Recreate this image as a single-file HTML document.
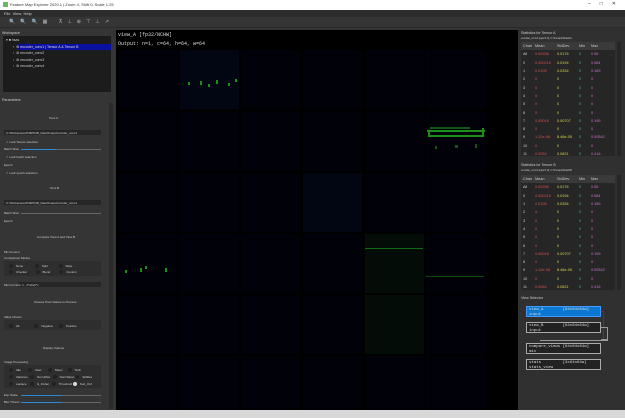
<!DOCTYPE html><html><head><style>
*{margin:0;padding:0;box-sizing:border-box}
body{width:625px;height:418px;background:#353535;font-family:"Liberation Sans",sans-serif;color:#ccc;position:relative;overflow:hidden;font-size:4px}
.a{position:absolute}
.t{position:absolute;white-space:nowrap}
.tile{position:absolute;width:59px;height:59px;background:#01010a}
.g{position:absolute;background:#1a8f1a}
table{border-collapse:collapse;font-size:3.8px;width:94px;table-layout:fixed}
td{height:8.3px;padding:0 0 0 2px;white-space:nowrap;overflow:hidden}
.r{color:#e05050}.y{color:#d8d84a}.gr{color:#40c060}.m{color:#d070d0}
.rad{display:inline-block;width:4px;height:4px;border-radius:50%;background:#222;vertical-align:middle;margin-right:3px}
.sl{position:absolute;height:1px;background:#666}
.node{position:absolute;border:1px solid #aaa;background:#222;font-family:"Liberation Mono",monospace;font-size:4px;color:#ddd;padding:1px 2px;line-height:5px}
</style></head><body>
<div class="a" style="left:0;top:0;width:625px;height:10px;background:#fff"></div>
<div class="a" style="left:3px;top:2px;width:5px;height:5px;background:#6b6"></div>
<div class="t" style="left:10px;top:2px;color:#333;font-size:4px">Feature Map Explorer 2020.1 | Zoom 4, Shift 0, Scale 1.25</div>
<div class="t" style="left:588px;top:1px;color:#333;font-size:5px;letter-spacing:9px">–□✕</div>
<div class="a" style="left:0;top:10px;width:625px;height:7px;background:#2d2d2d"></div>
<div class="t" style="left:4px;top:11px;font-size:4px">File&nbsp;&nbsp;View&nbsp;&nbsp;Help</div>
<div class="a" style="left:0;top:17px;width:625px;height:11px;background:#353535;border-bottom:1px solid #2a2a2a"></div>
<div class="t" style="left:9px;top:19px;font-size:5px;color:#bbb;letter-spacing:5px">🔍🔍🔍▦ ⊼⊥⊕⊤⊥↗</div>
<!-- left -->
<div class="t" style="left:2px;top:31px;font-size:3.6px">Workspace</div>
<div class="a" style="left:3px;top:36px;width:108px;height:56px;background:#1c1c1c"></div>
<div class="t" style="left:6px;top:38px;font-size:3.5px">▾ ■ hsas</div>
<div class="a" style="left:18px;top:44px;width:93px;height:6px;background:#0c10a0"></div>
<div class="t" style="left:13px;top:45px;font-size:3.5px;color:#ddd">›&nbsp;&nbsp;⚙ encoder_conv1 | Tensor A &amp; Tensor B</div>
<div class="t" style="left:13px;top:51px;font-size:3.5px">›&nbsp;&nbsp;⚙ encoder_conv2</div>
<div class="t" style="left:13px;top:58px;font-size:3.5px">›&nbsp;&nbsp;⚙ encoder_conv3</div>
<div class="t" style="left:13px;top:64px;font-size:3.5px">›&nbsp;&nbsp;⚙ encoder_conv4</div>
<div class="t" style="left:2px;top:98px;font-size:3.6px">Parameters</div>
<div class="a" style="left:109px;top:103px;width:4px;height:306px;background:#2a2a2a"></div>
<div class="t" style="left:49px;top:116px;font-size:3px">Tens A</div>
<div class="a" style="left:4px;top:130px;width:97px;height:5px;background:#262626"></div>
<div class="t" style="left:6px;top:131px;font-size:3px">C:/Workspace/PHB/PHB_Data/fmaps/encoder_conv1</div>
<div class="t" style="left:6px;top:140px;font-size:3px">✓ Lock Tensor selection</div>
<div class="t" style="left:4px;top:147px;font-size:3px">Batch Slice</div>
<div class="a" style="left:21px;top:149px;width:35px;height:1px;background:#2a8ad8"></div>
<div class="sl" style="left:56px;top:149px;width:45px"></div>
<div class="t" style="left:6px;top:155px;font-size:3px">✓ Lock batch selection</div>
<div class="t" style="left:4px;top:163px;font-size:3px">Epoch</div>
<div class="t" style="left:6px;top:171px;font-size:3px">✓ Lock epoch selection</div>
<div class="t" style="left:50px;top:186px;font-size:3px">Tens B</div>
<div class="a" style="left:4px;top:200px;width:97px;height:5px;background:#262626"></div>
<div class="t" style="left:6px;top:201px;font-size:3px">C:/Workspace/PHB/PHB_Data/fmaps/encoder_conv1</div>
<div class="t" style="left:4px;top:211px;font-size:3px">Batch Slice</div>
<div class="sl" style="left:21px;top:213px;width:80px"></div>
<div class="t" style="left:4px;top:219px;font-size:3px">Epoch</div>
<div class="t" style="left:37px;top:235px;font-size:3px">Compare View A and View B</div>
<div class="t" style="left:4px;top:250px;font-size:3px">Mix Amount</div>
<div class="t" style="left:4px;top:256px;font-size:3px">Comparison Modes</div>
<div class="a" style="left:4px;top:261px;width:97px;height:15px;background:#2e2e2e"></div>
<div class="t" style="left:9px;top:264px;font-size:3px"><span class="rad"></span>None&nbsp;&nbsp;&nbsp;&nbsp;&nbsp;&nbsp;&nbsp;&nbsp;&nbsp;&nbsp;&nbsp;&nbsp;&nbsp;&nbsp;<span class="rad"></span>Split&nbsp;&nbsp;&nbsp;&nbsp;&nbsp;&nbsp;&nbsp;&nbsp;&nbsp;&nbsp;&nbsp;&nbsp;&nbsp;<span class="rad"></span>Wipe</div>
<div class="t" style="left:9px;top:270px;font-size:3px"><span class="rad"></span>Checker&nbsp;&nbsp;&nbsp;&nbsp;&nbsp;&nbsp;&nbsp;&nbsp;&nbsp;&nbsp;<span class="rad"></span>Blend&nbsp;&nbsp;&nbsp;&nbsp;&nbsp;&nbsp;&nbsp;&nbsp;&nbsp;&nbsp;&nbsp;<span class="rad"></span>Custom</div>
<div class="a" style="left:18px;top:282px;width:83px;height:5px;background:#262626"></div>
<div class="t" style="left:4px;top:283px;font-size:3px">Mix Formula&nbsp;&nbsp;1 - 2*abs(t*x</div>
<div class="t" style="left:34px;top:300px;font-size:3px">Choose Pixel Values to Process</div>
<div class="t" style="left:4px;top:315px;font-size:3px">Value Choice</div>
<div class="a" style="left:4px;top:320px;width:97px;height:10px;background:#2e2e2e"></div>
<div class="t" style="left:9px;top:324px;font-size:3px"><span class="rad"></span>All&nbsp;&nbsp;&nbsp;&nbsp;&nbsp;&nbsp;&nbsp;&nbsp;&nbsp;&nbsp;&nbsp;&nbsp;&nbsp;&nbsp;&nbsp;&nbsp;&nbsp;&nbsp;<span class="rad"></span>Negative&nbsp;&nbsp;&nbsp;&nbsp;&nbsp;&nbsp;&nbsp;<span class="rad"></span>Positive</div>
<div class="t" style="left:43px;top:346px;font-size:3px">Display Options</div>
<div class="t" style="left:4px;top:360px;font-size:3px">Image Processing</div>
<div class="a" style="left:4px;top:365px;width:97px;height:23px;background:#2e2e2e"></div>
<div class="t" style="left:9px;top:368px;font-size:3px"><span class="rad"></span>Idle&nbsp;&nbsp;&nbsp;&nbsp;&nbsp;&nbsp;&nbsp;&nbsp;&nbsp;<span class="rad"></span>Raw&nbsp;&nbsp;&nbsp;&nbsp;&nbsp;&nbsp;&nbsp;&nbsp;<span class="rad"></span>Mean&nbsp;&nbsp;&nbsp;&nbsp;&nbsp;&nbsp;<span class="rad"></span>Tanh</div>
<div class="t" style="left:9px;top:375px;font-size:3px"><span class="rad"></span>Variance&nbsp;&nbsp;&nbsp;<span class="rad"></span>NormMax&nbsp;&nbsp;&nbsp;<span class="rad"></span>NormMean&nbsp;<span class="rad"></span>StdDev</div>
<div class="t" style="left:9px;top:382px;font-size:3px"><span class="rad"></span>Laplace&nbsp;&nbsp;&nbsp;&nbsp;<span class="rad"></span>G_Fisher&nbsp;&nbsp;&nbsp;<span class="rad"></span>Threshold&nbsp;<span class="rad" style="background:#ddd"></span>Sort_Ord</div>
<div class="t" style="left:4px;top:393px;font-size:3px">Exp Scale</div>
<div class="a" style="left:21px;top:395px;width:40px;height:1px;background:#2a8ad8"></div>
<div class="sl" style="left:61px;top:395px;width:40px"></div>
<div class="t" style="left:4px;top:400px;font-size:3px">Blur Thresh</div>
<div class="a" style="left:21px;top:402px;width:40px;height:1px;background:#2a8ad8"></div>
<div class="sl" style="left:61px;top:402px;width:40px"></div>
<!-- center -->
<div class="a" style="left:116px;top:30px;width:402px;height:380px;background:#000"></div>
<div class="t" style="left:118px;top:32px;font-family:'Liberation Mono',monospace;font-size:5px;color:#ddd">view_A [fp32/NCHW]</div>
<div class="t" style="left:118px;top:41px;font-family:'Liberation Mono',monospace;font-size:5px;color:#ddd">Output: n=1, c=64, h=64, w=64</div>
<div class="tile" style="left:118px;top:50px"></div><div class="tile" style="left:180px;top:50px;background:#020612"></div><div class="tile" style="left:241px;top:50px"></div><div class="tile" style="left:303px;top:50px"></div><div class="tile" style="left:365px;top:50px"></div><div class="tile" style="left:426px;top:50px"></div>
<div class="tile" style="left:118px;top:112px"></div><div class="tile" style="left:180px;top:112px"></div><div class="tile" style="left:241px;top:112px"></div><div class="tile" style="left:303px;top:112px"></div><div class="tile" style="left:365px;top:112px"></div><div class="tile" style="left:426px;top:112px"></div>
<div class="tile" style="left:118px;top:173px"></div><div class="tile" style="left:180px;top:173px"></div><div class="tile" style="left:241px;top:173px"></div><div class="tile" style="left:303px;top:173px;background:#020612"></div><div class="tile" style="left:365px;top:173px"></div><div class="tile" style="left:426px;top:173px"></div>
<div class="tile" style="left:118px;top:234px"></div><div class="tile" style="left:180px;top:234px"></div><div class="tile" style="left:241px;top:234px"></div><div class="tile" style="left:303px;top:234px"></div><div class="tile" style="left:365px;top:234px;background:#030c06"></div><div class="tile" style="left:426px;top:234px"></div>
<div class="tile" style="left:118px;top:295px"></div><div class="tile" style="left:180px;top:295px"></div><div class="tile" style="left:241px;top:295px"></div><div class="tile" style="left:303px;top:295px"></div><div class="tile" style="left:365px;top:295px;background:#030c06"></div><div class="tile" style="left:426px;top:295px"></div>
<div class="tile" style="left:118px;top:356px;height:53px"></div><div class="tile" style="left:180px;top:356px;height:53px"></div><div class="tile" style="left:241px;top:356px;height:53px"></div><div class="tile" style="left:303px;top:356px;height:53px"></div><div class="tile" style="left:365px;top:356px;height:53px"></div><div class="tile" style="left:426px;top:356px;height:53px"></div>
<div class="g" style="left:188px;top:82px;width:2px;height:3px"></div><div class="g" style="left:200px;top:81px;width:2px;height:4px"></div><div class="g" style="left:208px;top:84px;width:2px;height:3px"></div><div class="g" style="left:216px;top:80px;width:2px;height:4px"></div><div class="g" style="left:228px;top:83px;width:2px;height:3px"></div><div class="g" style="left:235px;top:79px;width:2px;height:3px"></div>
<div class="g" style="left:427px;top:130px;width:58px;height:1.5px"></div><div class="g" style="left:428px;top:135px;width:56px;height:2px"></div><div class="g" style="left:428px;top:130px;width:2px;height:7px"></div><div class="g" style="left:482px;top:128px;width:2px;height:9px"></div><div class="g" style="left:430px;top:127px;width:40px;height:2px;opacity:.6"></div>
<div class="g" style="left:435px;top:146px;width:2px;height:3px;opacity:.6"></div><div class="g" style="left:455px;top:145px;width:3px;height:3px;opacity:.6"></div><div class="g" style="left:475px;top:144px;width:2px;height:4px;opacity:.6"></div>
<div class="g" style="left:365px;top:248px;width:58px;height:1px;opacity:.7"></div>
<div class="g" style="left:426px;top:276px;width:58px;height:1px;opacity:.5"></div>
<div class="g" style="left:125px;top:270px;width:2px;height:3px"></div><div class="g" style="left:140px;top:268px;width:2px;height:4px"></div><div class="g" style="left:145px;top:266px;width:2px;height:3px"></div><div class="g" style="left:165px;top:268px;width:2px;height:4px"></div>
<div class="a" style="left:0;top:410px;width:625px;height:8px;background:#d8d8d8"></div>
<!-- right -->
<div class="a" style="left:518px;top:28px;width:107px;height:382px;background:#303030"></div>
<div class="t" style="left:521px;top:31px;font-size:3.6px">Statistics for Tensor A</div>
<div class="t" style="left:521px;top:37px;font-size:2.5px">encoder_conv1 [epoch 0], C:\\Fmaps\\Data\\A</div>
<div class="a" style="left:521px;top:42px;width:94px;height:114px;background:#262626;overflow:hidden">
<table><colgroup><col style="width:12px"><col style="width:22px"><col style="width:22px"><col style="width:12px"><col style="width:26px"></colgroup><tr style="background:#3a3a3a"><td>Chan</td><td>Mean</td><td>StdDev</td><td>Min</td><td>Max</td></tr>
<tr><td>All</td><td class="r">0.00256</td><td class="y">0.0176</td><td class="gr">0</td><td class="m">0.55</td></tr>
<tr><td>0</td><td class="r">0.000216</td><td class="y">0.0194</td><td class="gr">0</td><td class="m">0.584</td></tr>
<tr><td>1</td><td class="r">0.0105</td><td class="y">0.0334</td><td class="gr">0</td><td class="m">0.189</td></tr>
<tr><td>2</td><td class="r">0</td><td class="y">0</td><td class="gr">0</td><td class="m">0</td></tr>
<tr><td>3</td><td class="r">0</td><td class="y">0</td><td class="gr">0</td><td class="m">0</td></tr>
<tr><td>4</td><td class="r">0</td><td class="y">0</td><td class="gr">0</td><td class="m">0</td></tr>
<tr><td>5</td><td class="r">0</td><td class="y">0</td><td class="gr">0</td><td class="m">0</td></tr>
<tr><td>6</td><td class="r">0</td><td class="y">0</td><td class="gr">0</td><td class="m">0</td></tr>
<tr><td>7</td><td class="r">0.00018</td><td class="y">0.00707</td><td class="gr">0</td><td class="m">0.199</td></tr>
<tr><td>8</td><td class="r">0</td><td class="y">0</td><td class="gr">0</td><td class="m">0</td></tr>
<tr><td>9</td><td class="r">1.12e-06</td><td class="y">8.46e-05</td><td class="gr">0</td><td class="m">0.00542</td></tr>
<tr><td>10</td><td class="r">0</td><td class="y">0</td><td class="gr">0</td><td class="m">0</td></tr>
<tr><td>11</td><td class="r">0.0054</td><td class="y">0.0821</td><td class="gr">0</td><td class="m">0.416</td></tr>
<tr><td>12</td><td class="r">0</td><td class="y">0</td><td class="gr">0</td><td class="m">0</td></tr>
<tr><td>13</td><td class="r">0</td><td class="y">0</td><td class="gr">0</td><td class="m">0</td></tr></table></div>
<div class="t" style="left:521px;top:163px;font-size:3.6px">Statistics for Tensor B</div>
<div class="t" style="left:521px;top:169px;font-size:2.5px">encoder_conv1 [epoch 0], C:\\Fmaps\\Data\\B</div>
<div class="a" style="left:521px;top:175px;width:94px;height:115px;background:#262626;overflow:hidden">
<table><colgroup><col style="width:12px"><col style="width:22px"><col style="width:22px"><col style="width:12px"><col style="width:26px"></colgroup><tr style="background:#3a3a3a"><td>Chan</td><td>Mean</td><td>StdDev</td><td>Min</td><td>Max</td></tr>
<tr><td>All</td><td class="r">0.00256</td><td class="y">0.0176</td><td class="gr">0</td><td class="m">0.55</td></tr>
<tr><td>0</td><td class="r">0.000216</td><td class="y">0.0194</td><td class="gr">0</td><td class="m">0.584</td></tr>
<tr><td>1</td><td class="r">0.0105</td><td class="y">0.0334</td><td class="gr">0</td><td class="m">0.189</td></tr>
<tr><td>2</td><td class="r">0</td><td class="y">0</td><td class="gr">0</td><td class="m">0</td></tr>
<tr><td>3</td><td class="r">0</td><td class="y">0</td><td class="gr">0</td><td class="m">0</td></tr>
<tr><td>4</td><td class="r">0</td><td class="y">0</td><td class="gr">0</td><td class="m">0</td></tr>
<tr><td>5</td><td class="r">0</td><td class="y">0</td><td class="gr">0</td><td class="m">0</td></tr>
<tr><td>6</td><td class="r">0</td><td class="y">0</td><td class="gr">0</td><td class="m">0</td></tr>
<tr><td>7</td><td class="r">0.00018</td><td class="y">0.00707</td><td class="gr">0</td><td class="m">0.199</td></tr>
<tr><td>8</td><td class="r">0</td><td class="y">0</td><td class="gr">0</td><td class="m">0</td></tr>
<tr><td>9</td><td class="r">1.12e-06</td><td class="y">8.46e-05</td><td class="gr">0</td><td class="m">0.00542</td></tr>
<tr><td>10</td><td class="r">0</td><td class="y">0</td><td class="gr">0</td><td class="m">0</td></tr>
<tr><td>11</td><td class="r">0.0054</td><td class="y">0.0821</td><td class="gr">0</td><td class="m">0.416</td></tr>
<tr><td>12</td><td class="r">0</td><td class="y">0</td><td class="gr">0</td><td class="m">0</td></tr>
<tr><td>13</td><td class="r">0</td><td class="y">0</td><td class="gr">0</td><td class="m">0</td></tr></table></div>
<div class="a" style="left:617px;top:42px;width:4px;height:114px;background:#262626"></div>
<div class="a" style="left:617px;top:175px;width:4px;height:115px;background:#262626"></div>
<div class="t" style="left:521px;top:296px;font-size:3.6px">View Selector</div>
<div class="node" style="left:526px;top:306px;width:75px;height:11px;background:#0a78d0;border-color:#49f">view_A&nbsp;&nbsp;&nbsp;&nbsp;&nbsp;&nbsp;&nbsp;&nbsp;[64x64x64w]<br>input</div>
<div class="node" style="left:526px;top:322px;width:75px;height:11px">view_B&nbsp;&nbsp;&nbsp;&nbsp;&nbsp;&nbsp;&nbsp;&nbsp;[64x64x64w]<br>input</div>
<div class="node" style="left:526px;top:343px;width:75px;height:11px">compare_views&nbsp;[64x64x64w]<br>mix</div>
<div class="node" style="left:526px;top:359px;width:75px;height:11px">stats&nbsp;&nbsp;&nbsp;&nbsp;&nbsp;&nbsp;&nbsp;&nbsp;&nbsp;[3x64x64w]<br>stats_view</div>
<div class="a" style="left:601px;top:311px;width:3px;height:29px;border:1px solid #8a2030;border-left:none"></div>
<div class="a" style="left:601px;top:327px;width:7px;height:13px;border:1px solid #999;border-left:none"></div>
<div class="a" style="left:540px;top:340px;width:68px;height:1px;background:#999"></div>
</body></html>
